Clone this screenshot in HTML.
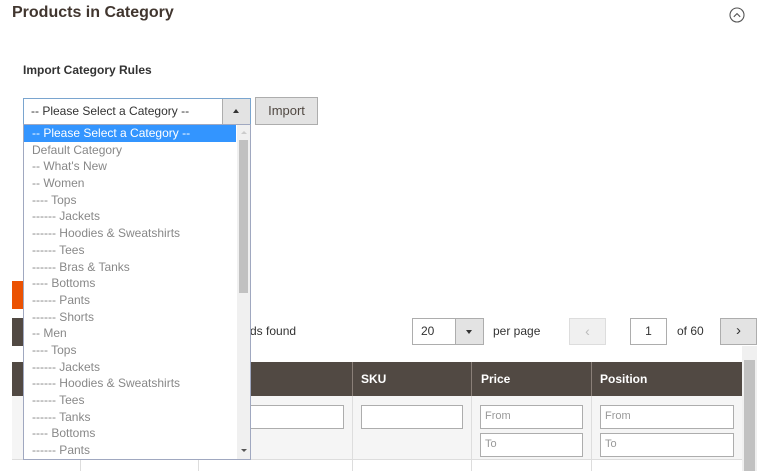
<!DOCTYPE html>
<html><head><style>
*{box-sizing:border-box;margin:0;padding:0}
body{width:768px;height:471px;overflow:hidden;background:#fff;font-family:"Liberation Sans",sans-serif;color:#333;position:relative}
.a{position:absolute}
.inp{position:absolute;border:1px solid #adadad;background:#fff;font-size:11px;color:#999;padding:4px 4px}
.opt{height:16.7px;line-height:16.7px;font-size:12px;color:#888;padding-left:8px;white-space:nowrap}
</style></head><body>
<div class="a" style="left:12px;top:4px;font-size:16px;color:#41362f;font-weight:bold">Products in Category</div>
<svg class="a" style="left:729px;top:7px" width="16" height="16"><circle cx="8" cy="8" r="7" fill="none" stroke="#555" stroke-width="1.1"/><path d="M4.8 9.8L8 6.6l3.2 3.2" fill="none" stroke="#555" stroke-width="1.1"/></svg>
<div class="a" style="left:23px;top:63px;font-size:12px;font-weight:bold;color:#333">Import Category Rules</div>
<div class="a" style="left:23px;top:98px;width:228px;height:27px;border:1px solid #7aa5cf;background:#fff"></div>
<div class="a" style="left:31px;top:104px;font-size:12px;color:#333">-- Please Select a Category --</div>
<div class="a" style="left:222px;top:99px;width:28px;height:25px;background:#e3e3e3;border-left:1px solid #adadad"></div>
<div class="a" style="left:233px;top:109px;width:0;height:0;border-left:3px solid transparent;border-right:3px solid transparent;border-bottom:4px solid #333"></div>
<div class="a" style="left:255px;top:97px;width:63px;height:28px;background:#e3e3e3;border:1px solid #adadad;font-size:13px;color:#514943;text-align:center;line-height:26px">Import</div>

<div class="a" style="left:12px;top:281px;width:12px;height:28px;background:#eb5202"></div>
<div class="a" style="left:12px;top:318px;width:12px;height:28px;background:#514943"></div>
<div class="a" style="left:250px;top:324px;font-size:12px;color:#333">ds found</div>
<div class="a" style="left:412px;top:318px;width:72px;height:27px;border:1px solid #adadad;background:#fff"></div>
<div class="a" style="left:421px;top:324px;font-size:12px">20</div>
<div class="a" style="left:455px;top:319px;width:28px;height:25px;background:#e3e3e3;border-left:1px solid #adadad"></div>
<div class="a" style="left:466px;top:330px;border-left:3px solid transparent;border-right:3px solid transparent;border-top:4px solid #333"></div>
<div class="a" style="left:493px;top:324px;font-size:12px">per page</div>
<div class="a" style="left:569px;top:318px;width:37px;height:27px;background:#f0f0f0;border:1px solid #ddd;color:#bbb;text-align:center;line-height:24px;font-size:14px">&lsaquo;</div>
<div class="a" style="left:630px;top:318px;width:37px;height:27px;border:1px solid #adadad;font-size:12px;text-align:center;line-height:25px">1</div>
<div class="a" style="left:677px;top:324px;font-size:12px">of 60</div>
<div class="a" style="left:720px;top:318px;width:37px;height:27px;background:#e3e3e3;border:1px solid #adadad;text-align:center;line-height:24px;font-size:15px;color:#333">&rsaquo;</div>

<div class="a" style="left:742px;top:346px;width:15px;height:125px;background:#f0f0f0"></div>
<div class="a" style="left:744px;top:360px;width:11px;height:111px;background:#c1c1c1"></div>
<div class="a" style="left:12px;top:362px;width:730px;height:34px;background:#514943"></div>
<div class="a" style="left:12px;top:396px;width:730px;height:64px;background:#f5f5f5;border-bottom:1px solid #ddd"></div>
<div class="a" style="left:352px;top:362px;width:1px;height:109px;background:#8a7f78"></div>
<div class="a" style="left:471px;top:362px;width:1px;height:109px;background:#8a7f78"></div>
<div class="a" style="left:591px;top:362px;width:1px;height:109px;background:#8a7f78"></div>
<div class="a" style="left:80px;top:396px;width:1px;height:75px;background:#ddd"></div>
<div class="a" style="left:198px;top:396px;width:1px;height:75px;background:#ddd"></div>
<div class="a" style="left:352px;top:396px;width:1px;height:75px;background:#ddd"></div>
<div class="a" style="left:471px;top:396px;width:1px;height:75px;background:#ddd"></div>
<div class="a" style="left:591px;top:396px;width:1px;height:75px;background:#ddd"></div>
<div class="a" style="left:361px;top:372px;font-size:12px;font-weight:bold;color:#fff">SKU</div>
<div class="a" style="left:481px;top:372px;font-size:12px;font-weight:bold;color:#fff">Price</div>
<div class="a" style="left:600px;top:372px;font-size:12px;font-weight:bold;color:#fff">Position</div>
<div class="inp" style="left:240px;top:405px;width:104px;height:24px"></div>
<div class="inp" style="left:361px;top:405px;width:102px;height:24px"></div>
<div class="inp" style="left:480px;top:405px;width:103px;height:24px">From</div>
<div class="inp" style="left:480px;top:433px;width:103px;height:24px">To</div>
<div class="inp" style="left:600px;top:405px;width:134px;height:24px">From</div>
<div class="inp" style="left:600px;top:433px;width:134px;height:24px">To</div>

<div class="a" style="left:23px;top:124px;width:228px;height:336px;background:#fff;border:1px solid #a0a8c0;overflow:hidden">
<div class="opt" style="background:#3395ff;color:#fff;width:212px">-- Please Select a Category --</div>
<div class="opt">Default Category</div>
<div class="opt">-- What's New</div>
<div class="opt">-- Women</div>
<div class="opt">---- Tops</div>
<div class="opt">------ Jackets</div>
<div class="opt">------ Hoodies &amp; Sweatshirts</div>
<div class="opt">------ Tees</div>
<div class="opt">------ Bras &amp; Tanks</div>
<div class="opt">---- Bottoms</div>
<div class="opt">------ Pants</div>
<div class="opt">------ Shorts</div>
<div class="opt">-- Men</div>
<div class="opt">---- Tops</div>
<div class="opt">------ Jackets</div>
<div class="opt">------ Hoodies &amp; Sweatshirts</div>
<div class="opt">------ Tees</div>
<div class="opt">------ Tanks</div>
<div class="opt">---- Bottoms</div>
<div class="opt">------ Pants</div>
<div class="a" style="left:213px;top:0;width:13px;height:334px;background:#f0f0f0"></div>
<div class="a" style="left:215px;top:15px;width:9px;height:153px;background:#c1c1c1"></div>
<div class="a" style="left:217px;top:6px;border-left:3px solid transparent;border-right:3px solid transparent;border-bottom:3px solid #ccc"></div>
<div class="a" style="left:217px;top:324px;border-left:3px solid transparent;border-right:3px solid transparent;border-top:3px solid #555"></div>
</div>
</body></html>
